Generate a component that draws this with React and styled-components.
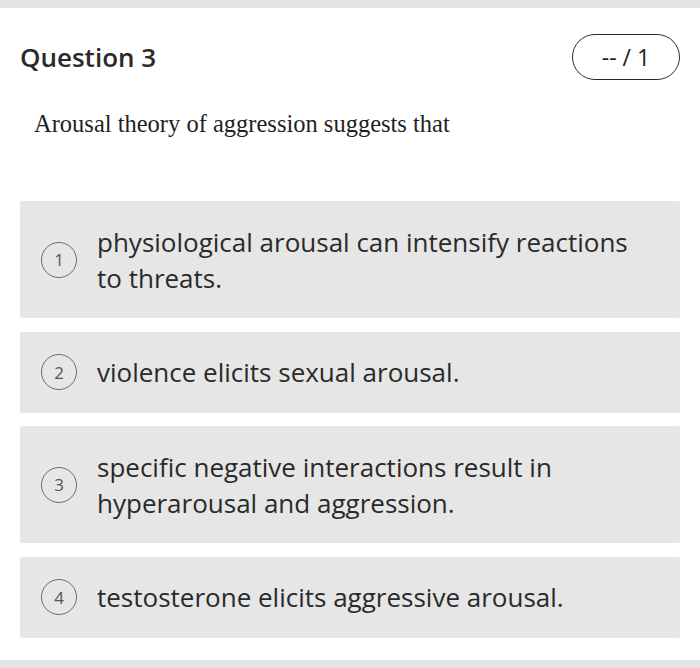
import React from 'react';
import styled, { createGlobalStyle } from 'styled-components';

const GlobalStyle = createGlobalStyle`
  html, body {
    margin: 0;
    padding: 0;
    background: #ffffff;
  }
  body {
    font-family: 'Open Sans', 'Liberation Sans', sans-serif;
    color: #333333;
  }
`;

const Page = styled.div`
  width: 700px;
  height: 668px;
  display: flex;
  flex-direction: column;
  background: #ffffff;
  overflow: hidden;
`;

const EdgeBar = styled.div`
  height: 8px;
  flex-shrink: 0;
  background: #e4e4e4;
`;

const Card = styled.div`
  flex: 1;
  padding: 26px 20px 0 20px;
  display: flex;
  flex-direction: column;
`;

const Header = styled.div`
  display: flex;
  align-items: center;
  justify-content: space-between;
  height: 46px;
`;

const Title = styled.h2`
  margin: 0;
  font-size: 26px;
  font-weight: 600;
  color: #2a2a2a;
`;

const ScorePill = styled.div`
  width: 108px;
  height: 46px;
  box-sizing: border-box;
  border: 1.8px solid #2b2b2b;
  border-radius: 23px;
  display: flex;
  align-items: center;
  justify-content: center;
  font-size: 23px;
  color: #222222;
`;

const Prompt = styled.p`
  margin: 28px 0 0 14px;
  font-family: 'Liberation Serif', 'Times New Roman', serif;
  font-size: 24.5px;
  color: #1f1f1f;
  line-height: 32px;
`;

const Options = styled.div`
  margin-top: 61px;
  display: flex;
  flex-direction: column;
  gap: 13.5px;
`;

const Option = styled.div`
  display: flex;
  align-items: center;
  gap: 20px;
  padding: 22.5px 40px 22.5px 21px;
  background: #e6e6e6;
  border-radius: 2px;
`;

const Badge = styled.span`
  flex-shrink: 0;
  width: 36px;
  height: 36px;
  box-sizing: border-box;
  border: 1.6px solid #6a6a6a;
  border-radius: 50%;
  display: flex;
  align-items: center;
  justify-content: center;
  font-size: 17px;
  color: #555555;
`;

const OptionText = styled.span`
  font-size: 26px;
  line-height: 36px;
  color: #2a2a2a;
`;

const choices = [
  'physiological arousal can intensify reactions to threats.',
  'violence elicits sexual arousal.',
  'specific negative interactions result in hyperarousal and aggression.',
  'testosterone elicits aggressive arousal.',
];

export default function App() {
  return (
    <>
      <GlobalStyle />
      <Page>
        <EdgeBar />
        <Card>
          <Header>
            <Title>Question 3</Title>
            <ScorePill>-- / 1</ScorePill>
          </Header>
          <Prompt>Arousal theory of aggression suggests that</Prompt>
          <Options>
            {choices.map((text, i) => (
              <Option key={i}>
                <Badge>{i + 1}</Badge>
                <OptionText>{text}</OptionText>
              </Option>
            ))}
          </Options>
        </Card>
        <EdgeBar />
      </Page>
    </>
  );
}
